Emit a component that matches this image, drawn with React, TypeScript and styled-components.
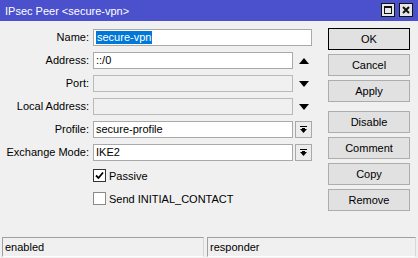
import React from "react";
import styled, { createGlobalStyle } from "styled-components";

const GlobalStyle = createGlobalStyle`
  html, body { margin: 0; padding: 0; background: #f0f0f0; }
  body { font-family: "Liberation Sans", Arial, sans-serif; font-size: 11px; color: #000; }
`;

const Window = styled.div`
  width: 418px;
  height: 258px;
  display: flex;
  flex-direction: column;
  background: #f0f0f0;
  overflow: hidden;
`;

const TitleBar = styled.div`
  height: 21px;
  flex: none;
  background: #4b50cd;
  color: #fff;
  display: flex;
  align-items: center;
  justify-content: space-between;
  padding: 0 5px 0 5px;
  font-size: 11px;
`;

const TitleButtons = styled.div`
  display: flex;
  gap: 4px;
  margin-top: -2px;
`;

const TitleBtn = styled.div`
  width: 12px;
  height: 12px;
  border: 1px solid #111;
  background: #e6e6e6;
  display: flex;
  align-items: center;
  justify-content: center;
`;

const Body = styled.div`
  flex: 1;
  display: flex;
  padding: 7px 8px 0 0;
`;

const Form = styled.div`
  display: grid;
  grid-template-columns: 89px 219px;
  column-gap: 4px;
  row-gap: 6px;
  grid-auto-rows: 17px;
  margin-top: 1px;
  align-content: start;
`;

const Label = styled.div`
  text-align: right;
  line-height: 17px;
  white-space: nowrap;
`;

const FieldRow = styled.div`
  display: flex;
  align-items: center;
  gap: 2px;
`;

const Field = styled.div<{ $disabled?: boolean; $full?: boolean }>`
  box-sizing: border-box;
  height: 17px;
  width: ${(p) => (p.$full ? "219px" : "200px")};
  border: 1px solid ${(p) => (p.$disabled ? "#b9b9b9" : "#a9a9a9")};
  background: ${(p) => (p.$disabled ? "#f0f0f0" : "#fff")};
  padding: 0 2px;
  line-height: 15px;
  white-space: nowrap;
  overflow: hidden;
`;

const Selected = styled.span`
  background: #0078d7;
  color: #fff;
  padding: 0 1px;
  display: inline-block;
  line-height: 13px;
  margin-top: 1px;
`;

const ArrowSlot = styled.div`
  width: 17px;
  height: 17px;
  display: flex;
  align-items: center;
  justify-content: center;
`;

const DropBtn = styled.div`
  box-sizing: border-box;
  width: 17px;
  height: 17px;
  border: 1px solid #a9a9a9;
  background: #ececec;
  display: flex;
  align-items: center;
  justify-content: center;
`;

const CheckRow = styled.label`
  grid-column: 2;
  display: flex;
  align-items: center;
  gap: 3px;
`;

const Box = styled.div<{ $light?: boolean }>`
  box-sizing: border-box;
  width: 13px;
  height: 13px;
  border: 1px solid ${(p) => (p.$light ? "#8a8a8a" : "#333")};
  background: #fff;
  display: flex;
  align-items: center;
  justify-content: center;
`;

const Buttons = styled.div`
  margin-left: 16px;
  width: 82px;
  display: flex;
  flex-direction: column;
  gap: 4px;
`;

const Button = styled.div<{ $default?: boolean; $groupStart?: boolean }>`
  box-sizing: border-box;
  height: 22px;
  border: 1px solid ${(p) => (p.$default ? "#000" : "#adadad")};
  background: #e1e1e1;
  display: flex;
  align-items: center;
  justify-content: center;
  margin-top: ${(p) => (p.$groupStart ? "5px" : "0")};
`;

const StatusBar = styled.div`
  flex: none;
  height: 20px;
  display: flex;
  gap: 3px;
  padding: 0 2px 1px 2px;
`;

const StatusCell = styled.div<{ $w: number }>`
  box-sizing: border-box;
  width: ${(p) => p.$w}px;
  border-top: 1px solid #a0a0a0;
  border-left: 1px solid #a0a0a0;
  border-right: 1px solid #d8d8d8;
  border-bottom: 1px solid #fff;
  padding-left: 2px;
  line-height: 18px;
`;

const UpArrow = () => (
  <svg width="10" height="6" viewBox="0 0 10 6"><polygon points="0,6 10,6 5,0" fill="#000" /></svg>
);
const DownArrow = () => (
  <svg width="10" height="6" viewBox="0 0 10 6"><polygon points="0,0 10,0 5,6" fill="#000" /></svg>
);
const DropIcon = () => (
  <svg width="7" height="8" viewBox="0 0 7 8">
    <rect x="0" y="0" width="7" height="1" fill="#000" />
    <polygon points="0,3 7,3 3.5,7" fill="#000" />
    <rect x="2" y="2" width="3" height="2" fill="#000" />
  </svg>
);
const Check = () => (
  <svg width="9" height="9" viewBox="0 0 9 9">
    <path d="M1 4.5 L3.5 7 L8 1.5" stroke="#000" strokeWidth="1.8" fill="none" />
  </svg>
);

export default function App() {
  return (
    <>
      <GlobalStyle />
      <Window>
        <TitleBar>
          <span>IPsec Peer &lt;secure-vpn&gt;</span>
          <TitleButtons>
            <TitleBtn>
              <svg width="8" height="8" viewBox="0 0 8 8">
                <rect x="0.5" y="0.5" width="7" height="7" fill="none" stroke="#111" />
                <rect x="0" y="0" width="8" height="2" fill="#111" />
              </svg>
            </TitleBtn>
            <TitleBtn>
              <svg width="8" height="8" viewBox="0 0 8 8">
                <path d="M1 1 L7 7 M7 1 L1 7" stroke="#111" strokeWidth="2" />
              </svg>
            </TitleBtn>
          </TitleButtons>
        </TitleBar>
        <Body>
          <Form>
            <Label>Name:</Label>
            <FieldRow>
              <Field $full><Selected>secure-vpn</Selected></Field>
            </FieldRow>
            <Label>Address:</Label>
            <FieldRow>
              <Field>::/0</Field>
              <ArrowSlot><UpArrow /></ArrowSlot>
            </FieldRow>
            <Label>Port:</Label>
            <FieldRow>
              <Field $disabled />
              <ArrowSlot><DownArrow /></ArrowSlot>
            </FieldRow>
            <Label>Local Address:</Label>
            <FieldRow>
              <Field $disabled />
              <ArrowSlot><DownArrow /></ArrowSlot>
            </FieldRow>
            <Label>Profile:</Label>
            <FieldRow>
              <Field>secure-profile</Field>
              <DropBtn><DropIcon /></DropBtn>
            </FieldRow>
            <Label>Exchange Mode:</Label>
            <FieldRow>
              <Field>IKE2</Field>
              <DropBtn><DropIcon /></DropBtn>
            </FieldRow>
            <CheckRow>
              <Box><Check /></Box>
              <span>Passive</span>
            </CheckRow>
            <CheckRow>
              <Box $light />
              <span>Send INITIAL_CONTACT</span>
            </CheckRow>
          </Form>
          <Buttons>
            <Button $default>OK</Button>
            <Button>Cancel</Button>
            <Button>Apply</Button>
            <Button $groupStart>Disable</Button>
            <Button>Comment</Button>
            <Button>Copy</Button>
            <Button>Remove</Button>
          </Buttons>
        </Body>
        <StatusBar>
          <StatusCell $w={202}>enabled</StatusCell>
          <StatusCell $w={209}>responder</StatusCell>
        </StatusBar>
      </Window>
    </>
  );
}
